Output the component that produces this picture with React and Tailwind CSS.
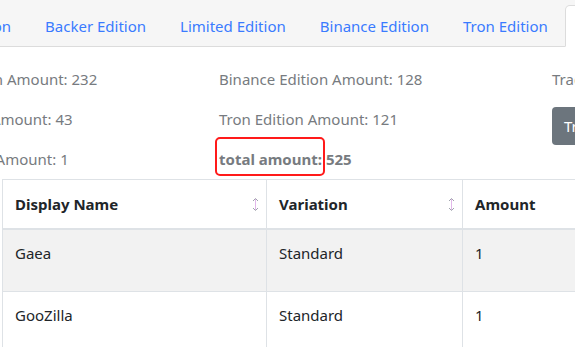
import React from "react";

const TABS = ["Standard Edition", "Backer Edition", "Limited Edition", "Binance Edition", "Tron Edition"];

const STATS = [
  ["Standard Edition Amount: 232", "Binance Edition Amount: 128", "Tradeable Amount: 311"],
  ["Backer Edition Amount: 43", "Tron Edition Amount: 121", null],
  ["Limited Edition Amount: 1", null, null],
];

const ROWS = [
  { name: "Gaea", variation: "Standard", amount: 1 },
  { name: "GooZilla", variation: "Standard", amount: 1 },
];

function SortIcon() {
  return (
    <svg width="7" height="15" viewBox="0 0 7 15" className="shrink-0">
      <line x1="3.5" y1="2" x2="3.5" y2="13" stroke="#e2b8ea" strokeWidth="1" />
      <polyline points="1,4 3.5,1.5 6,4" fill="none" stroke="#a0a4ad" strokeWidth="1" />
      <polyline points="1,11 3.5,13.5 6,11" fill="none" stroke="#a0a4ad" strokeWidth="1" />
    </svg>
  );
}

export default function App() {
  return (
    <div
      className="w-[575px] h-[347px] overflow-hidden bg-white text-[15px] leading-6 text-[#212529]"
      style={{ fontFamily: '"Noto Sans", "Open Sans", sans-serif' }}
    >
      {/* tabs */}
      <div className="bg-[#f6f6f6] pt-[5px]">
        <div className="flex border-b border-[#dcdcdc] -ml-[123px] w-[900px]">
          {TABS.map((t) => (
            <div key={t} className="px-4 py-2 border border-transparent text-[#3a7bff] whitespace-nowrap -mb-px">
              {t}
            </div>
          ))}
          <div className="w-[200px] -mb-px bg-white border border-[#dcdcdc] border-b-white rounded-tl-[5px]" />
        </div>
      </div>

      {/* stats */}
      <div className="grid grid-cols-[333px_333px_333px] -ml-[114px] pt-[20px] text-[#777b80]">
        {STATS.map((row, ri) =>
          row.map((cell, ci) => {
            const mb = ri === 2 ? "mb-2" : "mb-4";
            if (ri === 1 && ci === 2) {
              return (
                <div key={`${ri}-${ci}`} className="row-span-2">
                  <button className="h-[38px] px-3 rounded bg-[#6c757d] text-white">Transfer</button>
                </div>
              );
            }
            if (ri === 2 && ci === 2) return null;
            if (ri === 2 && ci === 1) {
              return (
                <div key="total" className={`${mb} whitespace-nowrap font-bold`}>
                  <span className="relative">
                    total amount:
                    <span className="absolute -left-1 -right-[3px] -top-[12px] -bottom-[7px] border-2 border-[#ff1a1a] rounded-[5px]" />
                  </span>{" "}
                  525
                </div>
              );
            }
            return (
              <div key={`${ri}-${ci}`} className={`${mb} whitespace-nowrap`}>
                {cell}
              </div>
            );
          })
        )}
      </div>

      {/* table */}
      <table className="ml-[2px] w-[800px] border-collapse">
        <thead>
          <tr className="border-t border-[#dee2e6]">
            <th className="w-[264px] border-x border-[#dee2e6] border-b-2 pl-3 pr-[7px] py-3 text-left font-bold">
              <div className="flex items-center justify-between">
                Display Name <SortIcon />
              </div>
            </th>
            <th className="w-[196px] border-x border-[#dee2e6] border-b-2 pl-3 pr-[7px] py-3 text-left font-bold">
              <div className="flex items-center justify-between">
                Variation <SortIcon />
              </div>
            </th>
            <th className="border-x border-[#dee2e6] border-b-2 px-3 py-3 text-left font-bold">Amount</th>
          </tr>
        </thead>
        <tbody>
          {ROWS.map((r, i) => (
            <tr key={r.name} className={i % 2 === 0 ? "bg-[#f2f2f2]" : "bg-white"}>
              <td className="h-[62px] align-top border border-[#dee2e6] px-3 pt-[11px]">{r.name}</td>
              <td className="align-top border border-[#dee2e6] px-3 pt-[11px]">{r.variation}</td>
              <td className="align-top border border-[#dee2e6] px-3 pt-[11px]">{r.amount}</td>
            </tr>
          ))}
        </tbody>
      </table>
    </div>
  );
}
